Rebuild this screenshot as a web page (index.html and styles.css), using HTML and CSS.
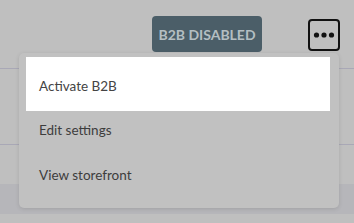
FILE: index.html
```html
<!DOCTYPE html>
<html lang="en">
<head>
    <meta charset="UTF-8" />
    <title>Store actions</title>
    <link rel="stylesheet" href="styles.css">
</head>
<body>

<!-- Page header -->
<div class="header">
    <span class="badge">B2B Disabled</span>
    <button class="more-btn" aria-label="More actions">
        <svg width="22" height="8" viewBox="0 0 22 8">
            <circle cx="3.5" cy="4" r="2.6" />
            <circle cx="11" cy="4" r="2.6" />
            <circle cx="18.5" cy="4" r="2.6" />
        </svg>
    </button>
</div>

<!-- Content behind the overlay -->
<div class="row row-first"></div>
<div class="row"></div>
<div class="band"></div>

<!-- Actions menu -->
<div class="menu">
    <div class="menu-item active">Activate B2B</div>
    <div class="menu-item">Edit settings</div>
    <div class="menu-item">View storefront</div>
</div>

</body>
</html>
```

FILE: styles.css
```css
/* Basic Styles */
body {
    font-family: Lato, "Liberation Sans", sans-serif;
    background-color: #bfbfbf;
    margin: 0;
    padding: 0;
    position: relative;
    height: 223px;
    overflow: hidden;
}

.header {
    display: flex;
    justify-content: flex-end;
    align-items: center;
    gap: 46px;
    padding: 15px 14px 0 0;
    height: 38px;
}

.badge {
    background-color: #4b5e68;
    color: #b4bec2;
    font-size: 14px;
    font-weight: bold;
    text-transform: uppercase;
    height: 36px;
    width: 110px;
    box-sizing: border-box;
    display: flex;
    align-items: center;
    justify-content: center;
    border-radius: 4px;
}

.more-btn {
    width: 32px;
    height: 32px;
    border: 2px solid #111;
    border-radius: 4px;
    background: transparent;
    padding: 0;
    display: flex;
    align-items: center;
    justify-content: center;
    margin-top: 2px;
}

.more-btn svg {
    fill: #111;
}

.row {
    height: 75px;
    border-bottom: 1px solid #a9a8b6;
}

.row-first {
    height: 15px;
}

.band {
    margin-top: 39px;
    height: 30px;
    background-color: #b6b6ba;
}

/* Menu */
.menu {
    position: absolute;
    top: 53px;
    left: 19px;
    width: 320px;
    height: 155px;
    box-sizing: border-box;
    padding: 4px 9px 0 7px;
    background-color: #c1c1c1;
    border-radius: 5px;
    box-shadow: 0 1px 4px rgba(0, 0, 0, 0.12);
}

.menu-item {
    font-size: 13.5px;
    line-height: 20px;
    color: #3d3d3d;
    padding: 9px 12px 16px 13px;
}

.menu-item.active {
    background-color: #ffffff;
    color: #444;
    padding: 19px 12px 15px 13px;
}
```
